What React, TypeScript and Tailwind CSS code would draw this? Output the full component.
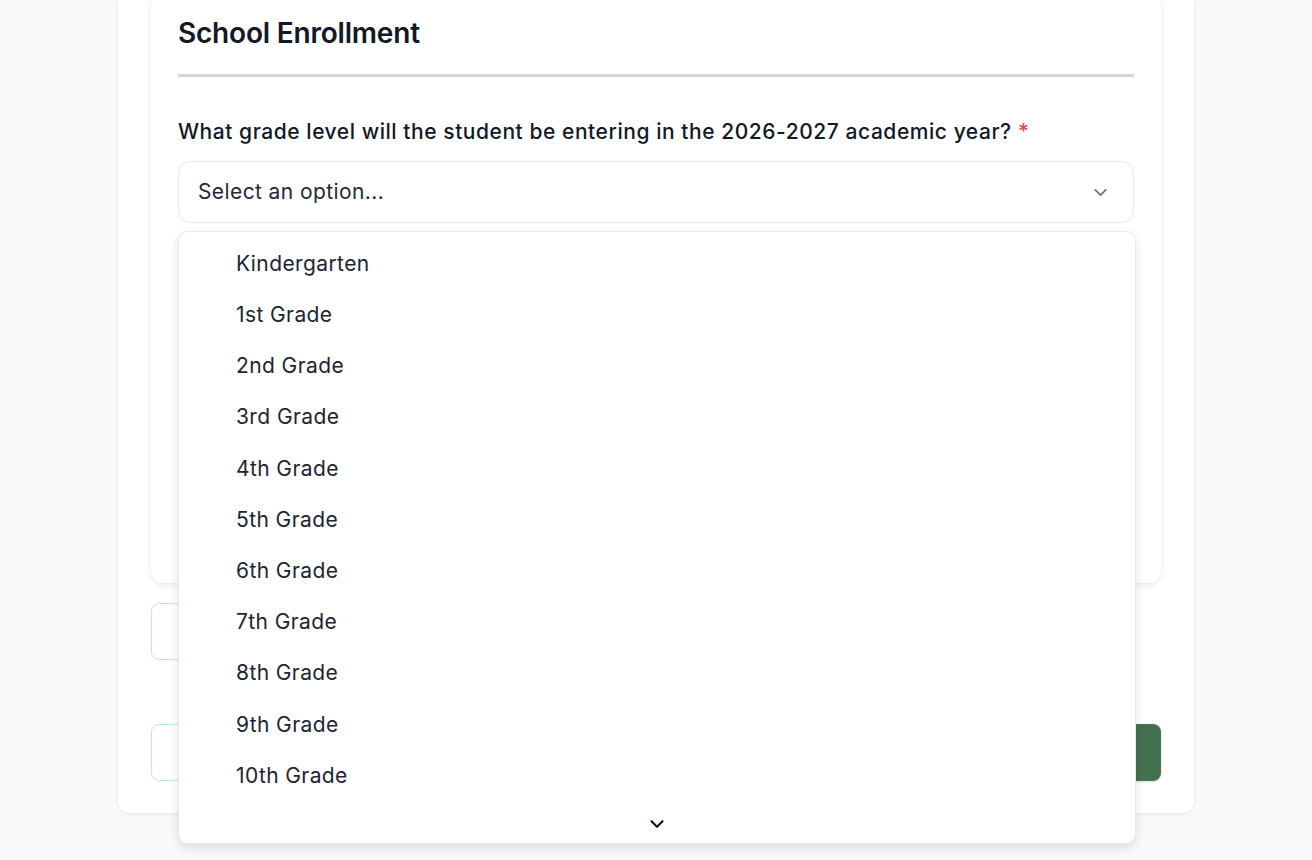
import React from 'react';
import { ChevronDown } from 'lucide-react';

const grades = [
  'Kindergarten',
  '1st Grade',
  '2nd Grade',
  '3rd Grade',
  '4th Grade',
  '5th Grade',
  '6th Grade',
  '7th Grade',
  '8th Grade',
  '9th Grade',
  '10th Grade',
];

export default function App() {
  return (
    <div className="relative min-h-[860px] bg-[#f8f9fb] font-['Inter','Noto_Sans',sans-serif] text-[#111827]">
      <div className="ml-[118px] w-[1076px] rounded-b-xl bg-white px-[33px] pb-[32px] shadow-[0_1px_4px_rgba(15,23,42,0.08)]">
        {/* section card */}
        <div className="h-[583px] rounded-b-xl bg-white px-[27px] pt-[16px] shadow-[0_2px_6px_rgba(15,23,42,0.10)]">
          <h2 className="text-[28px] font-semibold leading-[34px] tracking-[-0.2px] text-[#111827]">School Enrollment</h2>
          <div className="mt-[24px] h-[3px] bg-[#d3d4de]" />
          <label className="mt-[41px] block text-[21px] font-medium leading-[28px] tracking-[0.55px] text-[#111827]">
            What grade level will the student be entering in the 2026-2027 academic year?{' '}
            <span className="text-[#dc4c4c]">*</span>
          </label>
          <div className="mt-[15px] flex h-[62px] items-center justify-between rounded-xl border border-[#e3e5ef] bg-white pl-[19px] pr-[22px]">
            <span className="text-[21px] tracking-[0.4px] text-[#1f2937]">Select an option...</span>
            <ChevronDown className="h-[21px] w-[21px] text-[#64748b]" strokeWidth={2} />
          </div>
        </div>

        <div className="mt-[20px] h-[57px] w-[320px] rounded-lg border border-[#bdeec9] bg-white" />

        <div className="mt-[64px] flex h-[57px] items-stretch justify-between">
          <div className="w-[200px] rounded-lg border border-[#bdeec9] bg-white" />
          <div className="w-[200px] rounded-lg bg-[#447150] shadow-[0_1px_3px_rgba(0,0,0,0.15)]" />
        </div>
      </div>

      {/* open select list */}
      <div className="absolute left-[178px] top-[231px] flex h-[613px] w-[958px] flex-col rounded-[10px] border border-[#e8e8f0] bg-white pt-[6px] shadow-[0_4px_10px_rgba(15,23,42,0.12)]">
        {grades.map((g) => (
          <div key={g} className="flex h-[51.2px] items-center pl-[57px] text-[21px] tracking-[0.4px] text-[#1e2433]">
            {g}
          </div>
        ))}
        <div className="flex flex-1 items-center justify-center pt-[3px]">
          <ChevronDown className="h-[22px] w-[22px] text-[#111827]" strokeWidth={2.4} />
        </div>
      </div>
    </div>
  );
}
